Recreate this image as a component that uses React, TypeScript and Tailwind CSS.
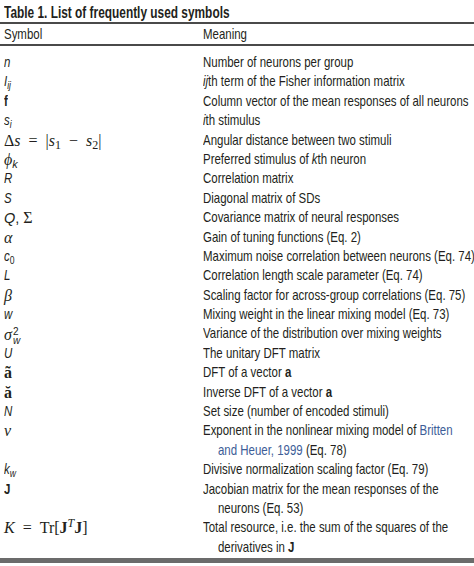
import React from 'react';

const sans = "font-['Liberation_Sans','Arial',sans-serif]";
const serif = "font-['Liberation_Serif','DejaVu_Serif',serif]";

// no condensed face installed, so squeeze Arial-width text to match the narrow original
const C = ({ children }: { children: React.ReactNode }) => (
  <span className="inline-block origin-left scale-x-[0.79] whitespace-nowrap">{children}</span>
);

const M = ({ children }: { children: React.ReactNode }) => (
  <span className={`${serif} text-[16px]`}>{children}</span>
);

const Link = ({ children }: { children: React.ReactNode }) => (
  <span className="text-[#3d5d97]">{children}</span>
);

interface Row {
  symbol: React.ReactNode;
  math?: boolean;
  meaning: React.ReactNode[];
}

const rows: Row[] = [
  { symbol: <i>n</i>, meaning: ['Number of neurons per group'] },
  {
    symbol: (
      <>
        <i>I</i>
        <sub>
          <i>ij</i>
        </sub>
      </>
    ),
    meaning: [
      <>
        <i>ij</i>th term of the Fisher information matrix
      </>,
    ],
  },
  { symbol: <b>f</b>, meaning: ['Column vector of the mean responses of all neurons'] },
  {
    symbol: (
      <>
        <i>s</i>
        <sub>
          <i>i</i>
        </sub>
      </>
    ),
    meaning: [
      <>
        <i>i</i>th stimulus
      </>,
    ],
  },
  {
    math: true,
    symbol: (
      <M>
        Δ<i>s</i>&nbsp; = &nbsp;|<i>s</i>
        <sub>1</sub>&nbsp; − &nbsp;<i>s</i>
        <sub>2</sub>|
      </M>
    ),
    meaning: ['Angular distance between two stimuli'],
  },
  {
    math: true,
    symbol: (
      <>
        <M>
          <i>ϕ</i>
        </M>
        <sub>
          <i>k</i>
        </sub>
      </>
    ),
    meaning: [
      <>
        Preferred stimulus of <i>k</i>th neuron
      </>,
    ],
  },
  { symbol: <i>R</i>, meaning: ['Correlation matrix'] },
  { symbol: <i>S</i>, meaning: ['Diagonal matrix of SDs'] },
  {
    math: true,
    symbol: (
      <>
        <i>Q</i>, <M>Σ</M>
      </>
    ),
    meaning: ['Covariance matrix of neural responses'],
  },
  {
    math: true,
    symbol: (
      <M>
        <i>α</i>
      </M>
    ),
    meaning: ['Gain of tuning functions (Eq. 2)'],
  },
  {
    symbol: (
      <>
        <i>c</i>
        <sub>0</sub>
      </>
    ),
    meaning: ['Maximum noise correlation between neurons (Eq. 74)'],
  },
  { symbol: <i>L</i>, meaning: ['Correlation length scale parameter (Eq. 74)'] },
  {
    math: true,
    symbol: (
      <M>
        <i>β</i>
      </M>
    ),
    meaning: ['Scaling factor for across-group correlations (Eq. 75)'],
  },
  { symbol: <i>w</i>, meaning: ['Mixing weight in the linear mixing model (Eq. 73)'] },
  {
    math: true,
    symbol: (
      <span className="inline-flex items-center align-middle">
        <M>
          <i>σ</i>
        </M>
        <span className="inline-flex flex-col text-[10px] leading-[9px] ml-[1px] pt-[2px]">
          <span>2</span>
          <i>w</i>
        </span>
      </span>
    ),
    meaning: ['Variance of the distribution over mixing weights'],
  },
  { symbol: <i>U</i>, meaning: ['The unitary DFT matrix'] },
  {
    math: true,
    symbol: (
      <M>
        <b>ã</b>
      </M>
    ),
    meaning: [
      <>
        DFT of a vector <b>a</b>
      </>,
    ],
  },
  {
    math: true,
    symbol: (
      <M>
        <b>ă</b>
      </M>
    ),
    meaning: [
      <>
        Inverse DFT of a vector <b>a</b>
      </>,
    ],
  },
  { symbol: <i>N</i>, meaning: ['Set size (number of encoded stimuli)'] },
  {
    math: true,
    symbol: (
      <M>
        <i>ν</i>
      </M>
    ),
    meaning: [
      <>
        Exponent in the nonlinear mixing model of <Link>Britten</Link>
      </>,
      <>
        <Link>and Heuer, 1999</Link> (Eq. 78)
      </>,
    ],
  },
  {
    symbol: (
      <>
        <i>k</i>
        <sub>
          <i>w</i>
        </sub>
      </>
    ),
    meaning: ['Divisive normalization scaling factor (Eq. 79)'],
  },
  {
    symbol: <b>J</b>,
    meaning: ['Jacobian matrix for the mean responses of the', 'neurons (Eq. 53)'],
  },
  {
    math: true,
    symbol: (
      <M>
        <i>K</i>&nbsp; = &nbsp;Tr[<b>J</b>
        <sup>
          <i>T</i>
        </sup>
        <b>J</b>]
      </M>
    ),
    meaning: [
      'Total resource, i.e. the sum of the squares of the',
      <>
        derivatives in <b>J</b>
      </>,
    ],
  },
];

export default function App() {
  return (
    <div className={`${sans} w-[474px] h-[566px] bg-white text-[#231f20] px-[4px] overflow-hidden`}>
      <div className="h-[22px] pt-[2px] text-[16.5px] font-bold leading-[20px]">
        <span className="inline-block origin-left scale-x-[0.72] whitespace-nowrap">
          Table 1. List of frequently used symbols
        </span>
      </div>
      <div className="h-[2px] bg-[#4a4a4a] -mx-[4px]" />
      <div className="grid grid-cols-[199px_1fr] h-[20px] text-[14.5px] leading-[20px]">
        <div>
          <C>Symbol</C>
        </div>
        <div>
          <C>Meaning</C>
        </div>
      </div>
      <div className="h-[2px] bg-[#4a4a4a] -mx-[4px]" />
      <div className="pt-[7px] text-[14.5px]">
        {rows.map((row, i) => (
          <div key={i} className="grid grid-cols-[199px_1fr]">
            <div className="h-[19.4px] leading-[19.4px] whitespace-nowrap">
              {row.math ? row.symbol : <C>{row.symbol}</C>}
            </div>
            <div>
              {row.meaning.map((line, j) => (
                <div key={j} className={`h-[19.4px] leading-[19.4px] ${j > 0 ? 'pl-[15px]' : ''}`}>
                  <C>{line}</C>
                </div>
              ))}
            </div>
          </div>
        ))}
      </div>
      <div className="h-[5px] bg-[#6b6b6b] -mx-[4px] mt-[1px]" />
    </div>
  );
}
